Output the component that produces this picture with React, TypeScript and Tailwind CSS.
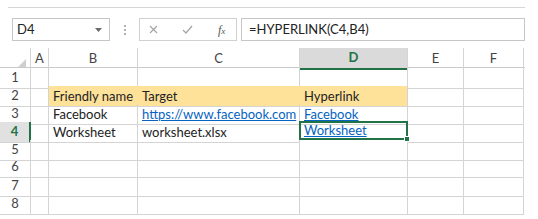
import React from "react";

const cols = ["A", "B", "C", "D", "E", "F"];
const gridCols = "grid grid-cols-[31px_18px_89px_162px_108px_56px_60px]";

type Cell = { text?: string; link?: boolean; fill?: boolean; selected?: boolean };

const rows: Cell[][] = [
  [{}, {}, {}, {}, {}, {}],
  [{}, { text: "Friendly name", fill: true }, { text: "Target", fill: true }, { text: "Hyperlink", fill: true }, {}, {}],
  [{}, { text: "Facebook" }, { text: "https://www.facebook.com", link: true }, { text: "Facebook", link: true }, {}, {}],
  [{}, { text: "Worksheet" }, { text: "worksheet.xlsx" }, { text: "Worksheet", link: true, selected: true }, {}, {}],
  [{}, {}, {}, {}, {}, {}],
  [{}, {}, {}, {}, {}, {}],
  [{}, {}, {}, {}, {}, {}],
  [{}, {}, {}, {}, {}, {}],
];

const rowHeights = ["h-[18px]", "h-[18px]", "h-[18px]", "h-[18px]", "h-[17px]", "h-[19px]", "h-[18px]", "h-[18px]"];

function FormulaBar() {
  return (
    <div className="flex h-[23px] items-stretch pl-[12px] pr-[13px] mt-[10px]">
      <div className="flex w-[98px] items-center justify-between border border-[#c6c6c6] pl-[4px] pr-[7px] text-[13px] text-[#222]">
        <span>D4</span>
        <svg width="7" height="4" viewBox="0 0 7 4">
          <path d="M0 0 L7 0 L3.5 4 Z" fill="#6a6a6a" />
        </svg>
      </div>
      <div className="flex w-[29px] flex-col items-center justify-center gap-[2px]">
        <span className="h-[2px] w-[2px] bg-[#b0b0b0]" />
        <span className="h-[2px] w-[2px] bg-[#b0b0b0]" />
        <span className="h-[2px] w-[2px] bg-[#b0b0b0]" />
      </div>
      <div className="flex w-[98px] items-center border border-[#d0d0d0] text-[#a8a8a8]">
        <svg className="ml-[9px]" width="9" height="9" viewBox="0 0 9 9">
          <path d="M1 1 L8 8 M8 1 L1 8" stroke="#a6a6a6" strokeWidth="1.2" fill="none" />
        </svg>
        <svg className="ml-[24px]" width="11" height="9" viewBox="0 0 11 9">
          <path d="M1 5 L4 8 L10 1" stroke="#a6a6a6" strokeWidth="1.3" fill="none" />
        </svg>
        <span className="ml-[25px] font-['Liberation_Serif',serif] text-[12px] italic text-[#555]">
          f<span className="text-[9px]">x</span>
        </span>
      </div>
      <div className="ml-[4px] flex flex-1 items-center border border-[#c6c6c6] pl-[7px] text-[13px] text-[#222]">
        =HYPERLINK(C4,B4)
      </div>
    </div>
  );
}

export default function App() {
  return (
    <div className="h-[219px] w-[538px] overflow-hidden bg-white font-['Lato',sans-serif]">
      <div className="ml-[8px] mr-[13px] mt-[7px] h-px bg-[#d6d6d6]" />
      <FormulaBar />
      <div className="mt-[7px] w-[525px]">
        <div className={`${gridCols} h-[20px] border-b border-[#c9c9c9]`}>
          <div className="relative border-r border-[#d4d4d4]">
            <svg className="absolute right-[4px] bottom-[3px]" width="8" height="8" viewBox="0 0 8 8">
              <path d="M8 0 L8 8 L0 8 Z" fill="#cfcfcf" />
            </svg>
          </div>
          {cols.map((c) =>
            c === "D" ? (
              <div
                key={c}
                className="flex items-center justify-center border-r border-b-2 border-r-[#d4d4d4] border-b-[#217346] bg-[#dadada] text-[13px] font-bold text-[#217346]"
              >
                {c}
              </div>
            ) : (
              <div key={c} className="flex items-center justify-center border-r border-[#d4d4d4] text-[13px] text-[#444]">
                {c}
              </div>
            )
          )}
        </div>
        {rows.map((row, r) => (
          <div key={r} className={`${gridCols} ${rowHeights[r]}`}>
            {r === 3 ? (
              <div className="flex items-center justify-center border-r-2 border-b border-r-[#217346] border-b-[#d4d4d4] bg-[#e1e1e1] text-[13px] font-bold text-[#217346]">
                {r + 1}
              </div>
            ) : (
              <div className="flex items-center justify-center border-r border-b border-[#d4d4d4] text-[13px] text-[#444]">
                {r + 1}
              </div>
            )}
            {row.map((cell, c) => {
              if (cell.selected) {
                return (
                  <div
                    key={c}
                    className="relative -mt-px -ml-px flex h-[19px] items-center border-2 border-[#217346] pl-[3px] text-[13px] leading-[15px] text-[#0563c1] underline"
                  >
                    {cell.text}
                    <span className="absolute right-[-4px] bottom-[-4px] h-[6px] w-[6px] border border-white bg-[#217346]" />
                  </div>
                );
              }
              const bg = cell.fill ? "bg-[#ffe29a]" : "";
              const borders = cell.fill ? (c === 3 ? "border-r border-b border-r-[#d4d4d4] border-b-[#d4d4d4]" : "border-b border-[#d4d4d4]") : "border-r border-b border-[#d4d4d4]";
              return (
                <div
                  key={c}
                  className={`flex items-center overflow-visible whitespace-nowrap pl-[4px] text-[13px] leading-[16px] ${bg} ${borders} ${
                    cell.link ? "text-[#0563c1] underline" : "text-[#222]"
                  }`}
                >
                  {cell.text}
                </div>
              );
            })}
          </div>
        ))}
      </div>
    </div>
  );
}
